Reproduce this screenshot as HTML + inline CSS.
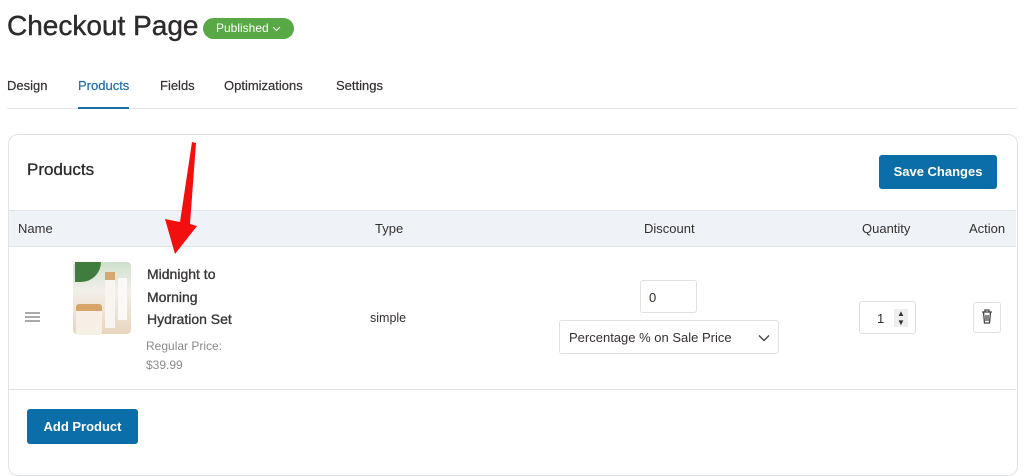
<!DOCTYPE html><html><head><style>
body{margin:0;width:1024px;height:457px;background:#fff;font-family:"Liberation Sans",sans-serif;color:#353030;position:relative;overflow:hidden}
.a{position:absolute}
</style></head><body>
<div class="a" style="left:7px;top:10px;font-size:28px;color:#2c2a2a;-webkit-text-stroke:0.4px #2c2a2a">Checkout Page</div>
<div class="a" style="left:203px;top:18px;width:91px;height:21px;border-radius:11px;background:#58a846;color:#fff;font-size:12px;line-height:21px;text-align:center">Published <svg width="9" height="6" style="vertical-align:middle"><path d="M1 1l3.5 3.5L8 1" stroke="#fff" fill="none"/></svg></div>
<div class="a" style="left:7px;top:78px;font-size:13px;-webkit-text-stroke:0.2px">Design</div>
<div class="a" style="left:78px;top:78px;font-size:13px;color:#1e6fa8;-webkit-text-stroke:0.2px">Products</div>
<div class="a" style="left:160px;top:78px;font-size:13px;-webkit-text-stroke:0.2px">Fields</div>
<div class="a" style="left:224px;top:78px;font-size:13px;-webkit-text-stroke:0.2px">Optimizations</div>
<div class="a" style="left:336px;top:78px;font-size:13px;-webkit-text-stroke:0.2px">Settings</div>
<div class="a" style="left:7px;top:108px;width:1010px;height:1px;background:#e2e4e8"></div>
<div class="a" style="left:78px;top:107px;width:51px;height:2px;background:#1e6fa8"></div>
<div class="a" style="left:8px;top:134px;width:1008px;height:340px;border:1px solid #e0e3e8;border-radius:10px"></div>
<div class="a" style="left:27px;top:160px;font-size:17px;color:#2c2a2a;-webkit-text-stroke:0.3px #2c2a2a">Products</div>
<div class="a" style="left:879px;top:155px;width:118px;height:34px;background:#0b6ea8;border-radius:3px;color:#fff;font-size:13px;font-weight:bold;line-height:34px;text-align:center">Save Changes</div>
<div class="a" style="left:9px;top:210px;width:1007px;height:35px;background:#eff3f7;border-top:1px solid #e0e3e8;border-bottom:1px solid #e0e3e8"></div>
<div class="a" style="left:18px;top:221px;font-size:13px">Name</div>
<div class="a" style="left:375px;top:221px;font-size:13px">Type</div>
<div class="a" style="left:644px;top:221px;font-size:13px">Discount</div>
<div class="a" style="left:862px;top:221px;font-size:13px">Quantity</div>
<div class="a" style="left:969px;top:221px;font-size:13px">Action</div>
<div class="a" style="left:25px;top:312px;width:15px;height:2px;background:#aaa;box-shadow:0 4px 0 #aaa,0 8px 0 #aaa"></div>
<div class="a" style="left:73px;top:262px;width:58px;height:72px;border-radius:4px;background:linear-gradient(180deg,#cfe0cc 0%,#f2efe9 40%,#e8d5bd 100%)">
<div class="a" style="left:2px;top:0;width:26px;height:20px;background:#3f7d3e;border-radius:0 0 20px 0"></div>
<div class="a" style="left:32px;top:10px;width:10px;height:48px;background:#f8f5f0;border-top:8px solid #d4a872"></div>
<div class="a" style="left:45px;top:16px;width:9px;height:42px;background:#fbf9f5"></div>
<div class="a" style="left:3px;top:42px;width:26px;height:24px;background:#f6efe5;border-top:7px solid #d7a56c;border-radius:3px"></div></div>
<div class="a" style="left:147px;top:263px;font-size:14px;line-height:22.5px;color:#3a3838;-webkit-text-stroke:0.35px #3a3838">Midnight to<br>Morning<br>Hydration Set</div>
<div class="a" style="left:146px;top:337px;font-size:12px;line-height:19px;color:#8a8a8a">Regular Price:<br>$39.99</div>
<div class="a" style="left:370px;top:311px;font-size:12.5px">simple</div>
<div class="a" style="left:640px;top:280px;width:57px;height:33px;border:1px solid #dfe1e4;border-radius:3px;font-size:13px;line-height:33px;padding-left:8px;box-sizing:border-box">0</div>
<div class="a" style="left:559px;top:320px;width:220px;height:34px;border:1px solid #dfe1e4;border-radius:3px;font-size:13px;line-height:34px;padding-left:9px;box-sizing:border-box">Percentage % on Sale Price<svg class="a" style="right:8px;top:13px" width="12" height="8"><path d="M1 1.5l5 5 5-5" stroke="#444" stroke-width="1.4" fill="none"/></svg></div>
<div class="a" style="left:859px;top:301px;width:57px;height:33px;border:1px solid #dfe1e4;border-radius:3px;box-sizing:border-box;font-size:13px;line-height:33px"><span class="a" style="left:17px">1</span><span class="a" style="left:34px;top:7px;width:14px;height:18px;background:#eee;font-size:8px;line-height:9px;text-align:center">▲<br>▼</span></div>
<div class="a" style="left:973px;top:302px;width:28px;height:31px;border:1px solid #dfe1e4;border-radius:3px;box-sizing:border-box">
<svg width="28" height="31" class="a" style="left:-1px;top:-1px"><path d="M9 10h10M12 10V8h4v2M10.5 10l1 11h5l1-11M13 13v6M15 13v6" stroke="#444" stroke-width="1.3" fill="none"/></svg></div>
<div class="a" style="left:9px;top:389px;width:1007px;height:1px;background:#e0e3e8"></div>
<div class="a" style="left:27px;top:409px;width:111px;height:35px;background:#0b6ea8;border-radius:3px;color:#fff;font-size:13px;font-weight:bold;line-height:35px;text-align:center">Add Product</div>
<svg class="a" style="left:0;top:0" width="1024" height="457"><polygon points="192,142 196,143 190,224 197,226 175,254 165,219 180,222" fill="#f40f0f"/></svg>
</body></html>
